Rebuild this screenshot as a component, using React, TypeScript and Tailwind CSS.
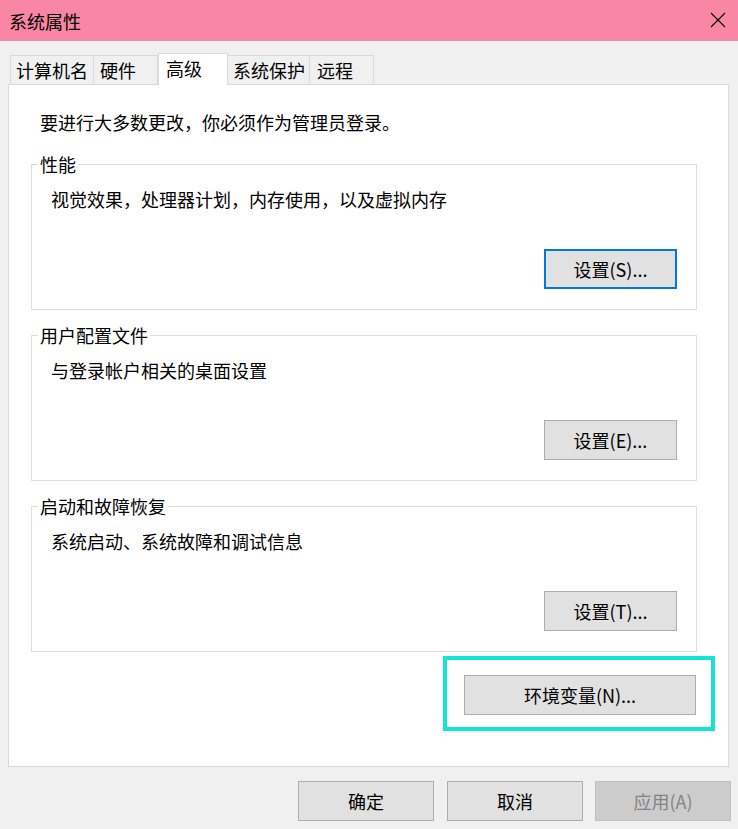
import React from "react"

const font = { fontFamily: '"Noto Sans CJK SC", "Noto Sans", sans-serif' }

type Tab = { label: string; width: string; pad: string; active?: boolean; first?: boolean }

const tabs: Tab[] = [
  { label: "计算机名", width: "w-[84px]", pad: "pl-[5px]", first: true },
  { label: "硬件", width: "w-[65px]", pad: "pl-[6px]" },
  { label: "高级", width: "w-[70px]", pad: "pl-[7px]", active: true },
  { label: "系统保护", width: "w-[83px]", pad: "pl-[5px]" },
  { label: "远程", width: "w-[65px]", pad: "pl-[7px]" },
]

const groups = [
  { title: "性能", desc: "视觉效果，处理器计划，内存使用，以及虚拟内存", button: "设置(S)...", focused: true },
  { title: "用户配置文件", desc: "与登录帐户相关的桌面设置", button: "设置(E)..." },
  { title: "启动和故障恢复", desc: "系统启动、系统故障和调试信息", button: "设置(T)..." },
]

const WinButton = ({
  label,
  width,
  focused,
  disabled,
}: {
  label: string
  width: string
  focused?: boolean
  disabled?: boolean
}) => (
  <button
    className={
      disabled
        ? `${width} h-[40px] border border-[#bfbfbf] bg-[#cccccc] text-[#838383] text-[18px] leading-[24px]`
        : focused
          ? `${width} h-[40px] border-2 border-[#0078d7] bg-[#e1e1e1] text-black text-[18px] leading-[24px]`
          : `${width} h-[40px] border border-[#adadad] bg-[#e1e1e1] text-black text-[18px] leading-[24px]`
    }
  >
    {label}
  </button>
)

export default function App() {
  return (
    <div className="w-[738px] h-[829px] bg-[#f0f0f0] text-black overflow-hidden" style={font}>
      {/* Title bar */}
      <div className="h-[41px] bg-[#f886a4] flex items-center justify-between pl-[9px] pr-[12px]">
        <span className="text-[18px] leading-[24px]">系统属性</span>
        <svg width="16" height="16" viewBox="0 0 16 16" className="mt-[-2px]">
          <path d="M1 1 L15 15 M15 1 L1 15" stroke="#000" strokeWidth="1.1" />
        </svg>
      </div>

      {/* Tabs */}
      <div className="relative z-10 flex items-end h-[32px] mt-[12px]">
        {tabs.map((t) => (
          <div
            key={t.label}
            className={
              t.active
                ? `${t.width} ${t.pad} h-[32px] pb-[3px] bg-white border-t border-l border-r border-[#d9d9d9] flex items-center text-[18px] leading-[24px]`
                : `${t.width} ${t.pad} ${t.first ? "ml-[10px]" : "-ml-px"} h-[29px] mb-px bg-[#f0f0f0] border-t border-l border-r border-[#d9d9d9] flex items-center text-[18px] leading-[24px]`
            }
          >
            {t.label}
          </div>
        ))}
      </div>

      {/* Panel */}
      <div className="-mt-px ml-[8px] w-[721px] h-[683px] border border-[#d9d9d9] bg-white flex flex-col">
        <p className="pt-[25px] pl-[31px] text-[18px] leading-[24px]">要进行大多数更改，你必须作为管理员登录。</p>

        {groups.map((g, i) => (
          <fieldset
            key={g.title}
            className={`${i === 0 ? "mt-[20px]" : "mt-[15px]"} ml-[22px] w-[666px] border border-[#dcdcdc] pb-[20px] flex flex-col`}
          >
            <legend className="ml-[6px] px-[2px] text-[18px] leading-[20px]">{g.title}</legend>
            <p className="pt-[13px] pl-[19px] text-[18px] leading-[24px]">{g.desc}</p>
            <div className="mt-[38px] flex justify-end pr-[19px]">
              <WinButton label={g.button} width="w-[133px]" focused={g.focused} />
            </div>
          </fieldset>
        ))}

        <div className="mt-[4px] flex justify-end pr-[13px]">
          <div className="border-4 border-[#13e5d3] pl-[17px] pr-[15px] pt-[15px] pb-[12px]">
            <WinButton label="环境变量(N)..." width="w-[232px]" />
          </div>
        </div>
      </div>

      {/* Footer buttons */}
      <div className="mt-[14px] flex justify-end pr-[7px]">
        <WinButton label="确定" width="w-[136px]" />
        <div className="w-[13px]" />
        <WinButton label="取消" width="w-[136px]" />
        <div className="w-[12px]" />
        <WinButton label="应用(A)" width="w-[136px]" disabled />
      </div>
    </div>
  )
}
